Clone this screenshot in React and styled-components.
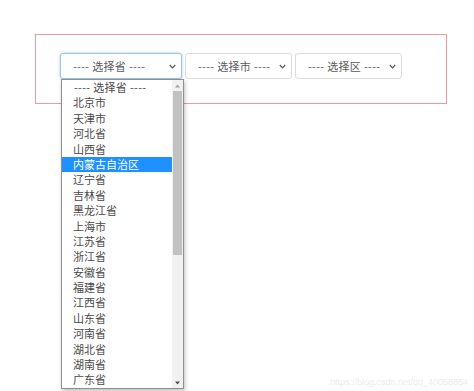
import React from "react";
import styled, { createGlobalStyle } from "styled-components";

const GlobalStyle = createGlobalStyle`
    html, body {
        margin: 0;
        padding: 0;
        background: #fff;
    }
    body {
        width: 474px;
        height: 391px;
        overflow: hidden;
        position: relative;
        font-family: "Noto Sans CJK SC", "Noto Sans", sans-serif;
    }
`

const Panel = styled.div`
    box-sizing: border-box;
    width: 412px;
    height: 70px;
    margin: 34px 0 0 35px;
    padding: 18px 0 0 24px;
    border: 1px solid #ef9aa0;
    display: flex;
    align-items: flex-start;
    gap: 3px;
`

const SelectBox = styled.div`
    box-sizing: border-box;
    position: relative;
    width: ${p => p.$w}px;
    height: 26px;
    padding: 0 5px 0 12px;
    display: flex;
    align-items: center;
    justify-content: space-between;
    border: 1px solid ${p => p.$focus ? "#9ec3ee" : "#dcdcdc"};
    border-radius: 3px;
    box-shadow: ${p => p.$focus ? "0 0 3px rgba(102,175,233,0.6)" : "none"};
    font-size: 11px;
    color: #5a5a5a;
    background: #fff;
`

const Label = styled.span`
    white-space: nowrap;
    letter-spacing: 0.3px;
`

const Dropdown = styled.div`
    box-sizing: border-box;
    position: absolute;
    top: 25px;
    left: 0;
    width: 123px;
    height: 310px;
    border: 1px solid #8f8f8f;
    background: #fff;
    box-shadow: 1px 2px 4px rgba(0, 0, 0, 0.25);
    display: flex;
    z-index: 2;
`

const Options = styled.ul`
    list-style: none;
    margin: 0;
    padding: 0;
    flex: 1;
`

const Option = styled.li`
    height: 15.4px;
    line-height: 15.4px;
    padding-left: ${p => p.$placeholder ? 12 : 11}px;
    font-size: 11px;
    letter-spacing: ${p => p.$placeholder ? 0.3 : 0}px;
    color: ${p => p.$active ? "#fff" : "#4a4a4a"};
    background: ${p => p.$active ? "#1e90ff" : "transparent"};
    white-space: nowrap;
`

const Scrollbar = styled.div`
    width: 11px;
    background: #f1f1f1;
    display: flex;
    flex-direction: column;
    align-items: center;
`

const Arrow = styled.div`
    height: 11px;
    display: flex;
    align-items: center;
    justify-content: center;
`

const Thumb = styled.div`
    width: 9px;
    height: 164px;
    background: #c1c1c1;
`

const Filler = styled.div`
    flex: 1;
`

const Watermark = styled.div`
    position: absolute;
    right: 6px;
    bottom: 4px;
    font-family: "Liberation Sans", sans-serif;
    font-size: 9px;
    color: #ececec;
`

const Chevron = () => (
    <svg width="7" height="5" viewBox="0 0 7 5">
        <path d="M0.8 1 L3.5 3.8 L6.2 1" fill="none" stroke="#555" strokeWidth="1.2"/>
    </svg>
)

const Tri = ({down}) => (
    <svg width="5" height="4" viewBox="0 0 5 4">
        <path d={down ? "M0 0.5 L5 0.5 L2.5 3.5 Z" : "M0 3.5 L5 3.5 L2.5 0.5 Z"} fill={down ? "#505050" : "#a3a3a3"}/>
    </svg>
)

const provinces = ["北京市", "天津市", "河北省", "山西省", "内蒙古自治区", "辽宁省", "吉林省", "黑龙江省",
    "上海市", "江苏省", "浙江省", "安徽省", "福建省", "江西省", "山东省", "河南省", "湖北省", "湖南省", "广东省"]

const App = () => {
    return (
        <>
            <GlobalStyle/>
            <Panel>
                <SelectBox $w={122} $focus>
                    <Label>---- 选择省 ----</Label>
                    <Chevron/>
                    <Dropdown>
                        <Options>
                            <Option $placeholder>---- 选择省 ----</Option>
                            {provinces.map(name => (
                                <Option key={name} $active={name === "内蒙古自治区"}>{name}</Option>
                            ))}
                        </Options>
                        <Scrollbar>
                            <Arrow><Tri/></Arrow>
                            <Thumb/>
                            <Filler/>
                            <Arrow><Tri down/></Arrow>
                        </Scrollbar>
                    </Dropdown>
                </SelectBox>
                <SelectBox $w={107}>
                    <Label>---- 选择市 ----</Label>
                    <Chevron/>
                </SelectBox>
                <SelectBox $w={107}>
                    <Label>---- 选择区 ----</Label>
                    <Chevron/>
                </SelectBox>
            </Panel>
            <Watermark>https://blog.csdn.net/qq_40058854</Watermark>
        </>
    );
}

export default App
